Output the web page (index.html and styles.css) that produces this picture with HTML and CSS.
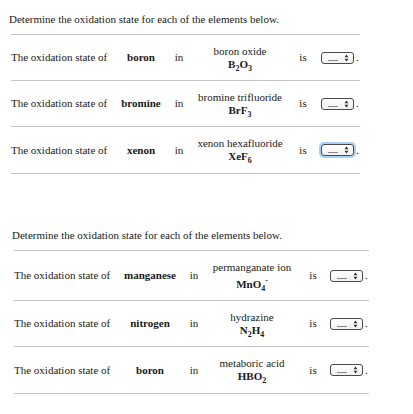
FILE: index.html
```html
<!DOCTYPE html>
<html>
<head>
<meta charset="utf-8">
<link rel="stylesheet" href="styles.css">
</head>
<body>
<div class="page">
  <section class="set set--first">
    <p class="prompt">Determine the oxidation state for each of the elements below.</p>
    <div class="table table--a">
      <div class="row">
        <div class="c c-lead">The oxidation state of</div>
        <div class="c c-mid"><b>boron</b></div>
        <div class="c c-mid">in</div>
        <div class="c c-mid"><div class="name">boron oxide</div><div class="formula">B<sub>2</sub>O<sub>3</sub></div></div>
        <div class="c c-mid">is</div>
        <div class="c c-ans"><span class="picker"><span class="blank"></span><svg class="arrows" width="5" height="8" viewBox="0 0 5 8"><polygon points="0.5,3.3 2.5,0.5 4.5,3.3"/><polygon points="0.5,4.7 2.5,7.5 4.5,4.7"/></svg></span><span class="dot">.</span></div>
      </div>
      <div class="row">
        <div class="c c-lead">The oxidation state of</div>
        <div class="c c-mid"><b>bromine</b></div>
        <div class="c c-mid">in</div>
        <div class="c c-mid"><div class="name">bromine trifluoride</div><div class="formula">BrF<sub>3</sub></div></div>
        <div class="c c-mid">is</div>
        <div class="c c-ans"><span class="picker"><span class="blank"></span><svg class="arrows" width="5" height="8" viewBox="0 0 5 8"><polygon points="0.5,3.3 2.5,0.5 4.5,3.3"/><polygon points="0.5,4.7 2.5,7.5 4.5,4.7"/></svg></span><span class="dot">.</span></div>
      </div>
      <div class="row row--tall">
        <div class="c c-lead">The oxidation state of</div>
        <div class="c c-mid"><b>xenon</b></div>
        <div class="c c-mid">in</div>
        <div class="c c-mid"><div class="name">xenon hexafluoride</div><div class="formula">XeF<sub>6</sub></div></div>
        <div class="c c-mid">is</div>
        <div class="c c-ans"><span class="picker picker--focus"><span class="blank"></span><svg class="arrows" width="5" height="8" viewBox="0 0 5 8"><polygon points="0.5,3.3 2.5,0.5 4.5,3.3"/><polygon points="0.5,4.7 2.5,7.5 4.5,4.7"/></svg></span><span class="dot">.</span></div>
      </div>
    </div>
  </section>

  <section class="set set--second">
    <p class="prompt">Determine the oxidation state for each of the elements below.</p>
    <div class="table table--b">
      <div class="row row--ion">
        <div class="c c-lead">The oxidation state of</div>
        <div class="c c-mid"><b>manganese</b></div>
        <div class="c c-mid">in</div>
        <div class="c c-mid"><div class="name">permanganate ion</div><div class="formula formula--charged">MnO<sub>4</sub><sup>-</sup></div></div>
        <div class="c c-mid">is</div>
        <div class="c c-ans"><span class="picker"><span class="blank"></span><svg class="arrows" width="5" height="8" viewBox="0 0 5 8"><polygon points="0.5,3.3 2.5,0.5 4.5,3.3"/><polygon points="0.5,4.7 2.5,7.5 4.5,4.7"/></svg></span><span class="dot">.</span></div>
      </div>
      <div class="row">
        <div class="c c-lead">The oxidation state of</div>
        <div class="c c-mid"><b>nitrogen</b></div>
        <div class="c c-mid">in</div>
        <div class="c c-mid"><div class="name">hydrazine</div><div class="formula">N<sub>2</sub>H<sub>4</sub></div></div>
        <div class="c c-mid">is</div>
        <div class="c c-ans"><span class="picker"><span class="blank"></span><svg class="arrows" width="5" height="8" viewBox="0 0 5 8"><polygon points="0.5,3.3 2.5,0.5 4.5,3.3"/><polygon points="0.5,4.7 2.5,7.5 4.5,4.7"/></svg></span><span class="dot">.</span></div>
      </div>
      <div class="row row--tall">
        <div class="c c-lead">The oxidation state of</div>
        <div class="c c-mid"><b>boron</b></div>
        <div class="c c-mid">in</div>
        <div class="c c-mid"><div class="name">metaboric acid</div><div class="formula">HBO<sub>2</sub></div></div>
        <div class="c c-mid">is</div>
        <div class="c c-ans"><span class="picker"><span class="blank"></span><svg class="arrows" width="5" height="8" viewBox="0 0 5 8"><polygon points="0.5,3.3 2.5,0.5 4.5,3.3"/><polygon points="0.5,4.7 2.5,7.5 4.5,4.7"/></svg></span><span class="dot">.</span></div>
      </div>
    </div>
  </section>
</div>
</body>
</html>
```

FILE: styles.css
```css
html, body {
  margin: 0;
  padding: 0;
  background: #ffffff;
}

body {
  font-family: "Liberation Serif", "Times New Roman", serif;
  font-size: 11px;
  line-height: 13px;
  color: #1a1a1a;
}

.page {
  padding-top: 13px;
}

.prompt {
  margin: 0 0 8px 0;
  line-height: 13px;
}

.set--first {
  padding-left: 9px;
}

.set--first .table {
  margin-left: 2px;
  width: 349px;
}

.set--second {
  margin-top: 55px;
  padding-left: 12px;
}

.set--second .table {
  margin-left: 2px;
  width: 355px;
}

.table {
  border-top: 1px solid #c4c4c4;
}

.row {
  display: grid;
  align-items: center;
  min-height: 45px;
  border-bottom: 1px solid #c4c4c4;
}

.row--tall {
  min-height: 46px;
}

.row--ion {
  min-height: 49px;
}

.table--a .row {
  grid-template-columns: 100px 60px 16px 106px 20px 1fr;
}

.table--b .row {
  grid-template-columns: 104px 64px 24px 92px 30px 1fr;
}

.c {
  white-space: nowrap;
}

.c-mid {
  text-align: center;
}

.c-ans {
  display: flex;
  align-items: center;
}

.table--a .c-ans {
  padding-left: 8px;
}

.table--b .c-ans {
  padding-left: 2px;
}

.name {
  line-height: 13px;
}

.formula {
  font-weight: bold;
  line-height: 13px;
}

.formula--charged {
  margin-top: 4px;
}

sub {
  font-size: 8px;
  line-height: 0;
  vertical-align: -3px;
}

sup {
  font-size: 8px;
  line-height: 0;
  vertical-align: 5px;
}

.picker {
  box-sizing: border-box;
  width: 33px;
  height: 12px;
  border: 1px solid #4a4a4a;
  border-radius: 3px;
  background: linear-gradient(#ffffff, #f1f1f1);
  display: flex;
  align-items: center;
  justify-content: space-between;
  padding: 0 4px 0 6px;
}

.picker--focus {
  box-shadow: 0 0 0 2px #a9d0f5;
}

.blank {
  width: 10px;
  height: 1px;
  background: #8a8a8a;
  margin-top: 5px;
}

.arrows {
  display: block;
  fill: #333333;
}

.dot {
  margin-left: 2px;
  line-height: 13px;
}
```
